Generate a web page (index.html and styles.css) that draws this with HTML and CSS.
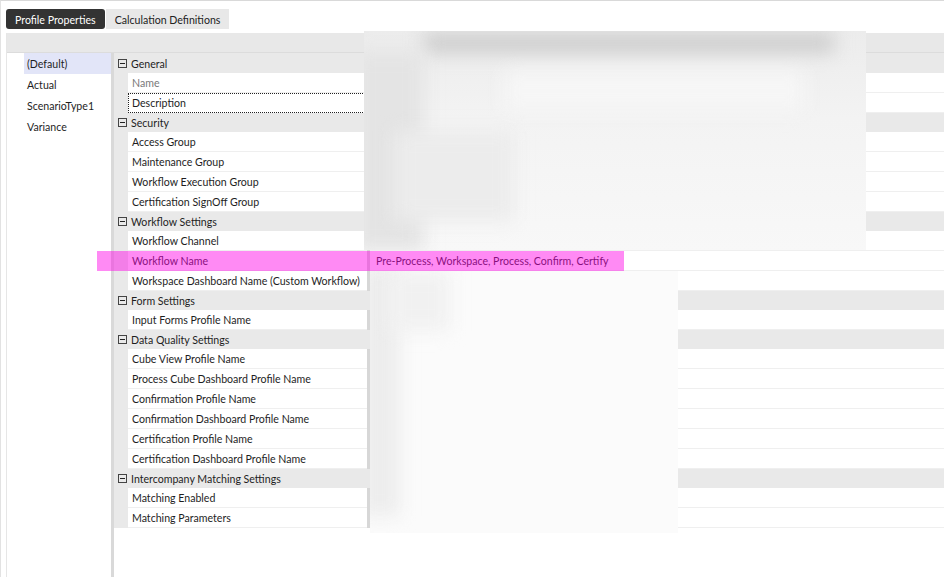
FILE: index.html
```html
<!DOCTYPE html>
<html>
<head>
<meta charset="utf-8">
<link rel="stylesheet" href="styles.css">
</head>
<body>
<div class="app">
  <div class="tabs">
    <div class="tab active">Profile Properties</div>
    <div class="tab">Calculation Definitions</div>
  </div>
  <div class="content">
    <div class="toolbar"></div>
    <div class="main">
      <ul class="list">
        <li class="item selected">(Default)</li>
        <li class="item">Actual</li>
        <li class="item">ScenarioType1</li>
        <li class="item">Variance</li>
      </ul>
      <div class="splitter"></div>
      <div class="grid">
        <div class="cat first"><svg class="tog" width="9" height="9" viewBox="0 0 9 9"><rect x="0.5" y="0.5" width="8" height="8" fill="none" stroke="#444"/><path d="M2 4.5h5" stroke="#222"/></svg><span class="label">General</span></div>
        <div class="prop"><div class="gut"></div><div class="name muted">Name</div><div class="sep"></div><div class="val"></div></div>
        <div class="prop"><div class="gut"></div><div class="name focus">Description</div><div class="sep"></div><div class="val"></div></div>
        <div class="cat"><svg class="tog" width="9" height="9" viewBox="0 0 9 9"><rect x="0.5" y="0.5" width="8" height="8" fill="none" stroke="#444"/><path d="M2 4.5h5" stroke="#222"/></svg><span class="label">Security</span></div>
        <div class="prop"><div class="gut"></div><div class="name">Access Group</div><div class="sep"></div><div class="val"></div></div>
        <div class="prop"><div class="gut"></div><div class="name">Maintenance Group</div><div class="sep"></div><div class="val"></div></div>
        <div class="prop"><div class="gut"></div><div class="name">Workflow Execution Group</div><div class="sep"></div><div class="val"></div></div>
        <div class="prop"><div class="gut"></div><div class="name">Certification SignOff Group</div><div class="sep"></div><div class="val"></div></div>
        <div class="cat"><svg class="tog" width="9" height="9" viewBox="0 0 9 9"><rect x="0.5" y="0.5" width="8" height="8" fill="none" stroke="#444"/><path d="M2 4.5h5" stroke="#222"/></svg><span class="label">Workflow Settings</span></div>
        <div class="prop"><div class="gut"></div><div class="name">Workflow Channel</div><div class="sep"></div><div class="val"></div></div>
        <div class="prop"><div class="gut"></div><div class="name">Workflow Name</div><div class="sep"></div><div class="val">Pre-Process, Workspace, Process, Confirm, Certify</div></div>
        <div class="prop"><div class="gut"></div><div class="name">Workspace Dashboard Name (Custom Workflow)</div><div class="sep"></div><div class="val"></div></div>
        <div class="cat"><svg class="tog" width="9" height="9" viewBox="0 0 9 9"><rect x="0.5" y="0.5" width="8" height="8" fill="none" stroke="#444"/><path d="M2 4.5h5" stroke="#222"/></svg><span class="label">Form Settings</span></div>
        <div class="prop"><div class="gut"></div><div class="name">Input Forms Profile Name</div><div class="sep"></div><div class="val"></div></div>
        <div class="cat"><svg class="tog" width="9" height="9" viewBox="0 0 9 9"><rect x="0.5" y="0.5" width="8" height="8" fill="none" stroke="#444"/><path d="M2 4.5h5" stroke="#222"/></svg><span class="label">Data Quality Settings</span></div>
        <div class="prop"><div class="gut"></div><div class="name">Cube View Profile Name</div><div class="sep"></div><div class="val"></div></div>
        <div class="prop"><div class="gut"></div><div class="name">Process Cube Dashboard Profile Name</div><div class="sep"></div><div class="val"></div></div>
        <div class="prop"><div class="gut"></div><div class="name">Confirmation Profile Name</div><div class="sep"></div><div class="val"></div></div>
        <div class="prop"><div class="gut"></div><div class="name">Confirmation Dashboard Profile Name</div><div class="sep"></div><div class="val"></div></div>
        <div class="prop"><div class="gut"></div><div class="name">Certification Profile Name</div><div class="sep"></div><div class="val"></div></div>
        <div class="prop"><div class="gut"></div><div class="name">Certification Dashboard Profile Name</div><div class="sep"></div><div class="val"></div></div>
        <div class="cat"><svg class="tog" width="9" height="9" viewBox="0 0 9 9"><rect x="0.5" y="0.5" width="8" height="8" fill="none" stroke="#444"/><path d="M2 4.5h5" stroke="#222"/></svg><span class="label">Intercompany Matching Settings</span></div>
        <div class="prop"><div class="gut"></div><div class="name">Matching Enabled</div><div class="sep"></div><div class="val"></div></div>
        <div class="prop"><div class="gut"></div><div class="name">Matching Parameters</div><div class="sep"></div><div class="val"></div></div>
      </div>
    </div>
  </div>
  <div class="highlight"></div>
  <div class="redact redact-a"><div class="blob b1"></div><div class="blob b2"></div><div class="blob b3"></div><div class="blob b4"></div></div>
  <div class="redact redact-b"><div class="blob b5"></div><div class="blob b6"></div></div>
</div>
</body>
</html>
```

FILE: styles.css
```css
html, body {
  margin: 0;
  padding: 0;
  background: #fff;
}
body {
  font-family: Lato, "Noto Sans", "Liberation Sans", sans-serif;
  font-size: 10.6px;
  color: #1e1e1e;
  overflow: hidden;
}
.app {
  height: 576px;
  border-top: 1px solid #d9d9d9;
  border-left: 1px solid #e2e2e2;
  display: flex;
  flex-direction: column;
}
.tabs {
  display: flex;
  margin: 8px 0 0 5px;
}
.tab {
  height: 20px;
  line-height: 22px;
  padding: 0 9px;
  background: #e8e8e8;
  color: #222;
  margin-left: 1px;
}
.tab.active {
  background: #333;
  color: #fff;
  border-radius: 3px;
  margin-left: 0;
}
.content {
  margin: 4px 0 0 5px;
  flex: 1;
  display: flex;
  flex-direction: column;
  border-left: 1px solid #e6e6e6;
  min-height: 0;
}
.toolbar {
  height: 19px;
  background: #e8e8e8;
  border-bottom: 1px solid #dcdcdc;
}
.main {
  flex: 1;
  display: flex;
  min-height: 0;
}
.list {
  list-style: none;
  margin: 0;
  padding: 0 0 0 17px;
  width: 87px;
}
.item {
  height: 21px;
  line-height: 23px;
  padding-left: 3px;
}
.item.selected {
  background: #e2e5f8;
}
.splitter {
  width: 3px;
  background: #d9d9d9;
}
.grid {
  flex: 1;
  display: flex;
  flex-direction: column;
}
.cat {
  height: 19px;
  background: #e9e9e9;
  display: flex;
  align-items: center;
  padding-left: 4px;
}
.cat.first {
  height: 20px;
}
.label {
  line-height: 19px;
  padding-top: 2px;
}
.tog {
  margin-right: 4px;
  flex: none;
}
.prop {
  display: flex;
  height: 20px;
}
.gut {
  width: 14px;
  background: #e9e9e9;
}
.name {
  width: 235px;
  height: 19px;
  padding-left: 4px;
  line-height: 21px;
  border-bottom: 1px solid #efefef;
  white-space: nowrap;
}
.name.muted {
  color: #7a7a7a;
}
.name.focus {
  height: 18px;
  border: 1px dotted #222;
  border-right: none;
  padding-left: 3px;
  line-height: 19px;
}
.sep {
  width: 3px;
  background: #d7d7d7;
}
.val {
  flex: 1;
  height: 19px;
  padding-left: 6px;
  line-height: 21px;
  border-bottom: 1px solid #efefef;
  white-space: nowrap;
}
.highlight {
  position: absolute;
  left: 97px;
  top: 251px;
  width: 527px;
  height: 20px;
  background: rgba(255, 0, 230, 0.46);
  pointer-events: none;
}
.redact {
  position: absolute;
  overflow: hidden;
}
.redact-a {
  left: 364px;
  top: 31px;
  width: 502px;
  height: 219px;
  background: linear-gradient(180deg, #ececec 0%, #f3f3f3 40%, #f8f8f8 100%);
}
.redact-b {
  left: 370px;
  top: 271px;
  width: 308px;
  height: 262px;
  background: #fbfbfb;
}
.blob {
  position: absolute;
  filter: blur(9px);
}
.b1 {
  left: 60px;
  top: 2px;
  width: 410px;
  height: 20px;
  background: #cdcdcd;
}
.b2 {
  left: -10px;
  top: 20px;
  width: 70px;
  height: 200px;
  background: #e4e4e4;
}
.b3 {
  left: 30px;
  top: 100px;
  width: 120px;
  height: 90px;
  background: #ececec;
}
.b4 {
  left: 140px;
  top: 40px;
  width: 300px;
  height: 40px;
  background: #f6f6f6;
}
.b5 {
  left: -10px;
  top: -5px;
  width: 40px;
  height: 250px;
  background: #ededed;
}
.b6 {
  left: 20px;
  top: 0px;
  width: 60px;
  height: 60px;
  background: #f1f1f1;
}
```
